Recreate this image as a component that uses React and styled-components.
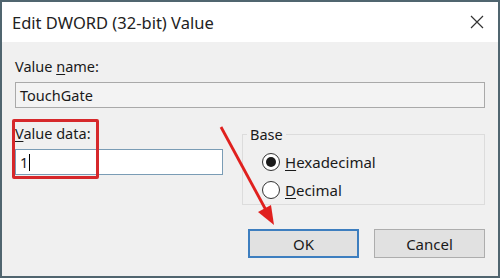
import React from 'react'
import styled, { createGlobalStyle } from 'styled-components'

const Global = createGlobalStyle`
  html, body { margin: 0; padding: 0; background: #f0f0f0; }
  * { box-sizing: border-box; }
`

const Window = styled.div`
  position: relative;
  width: 500px;
  height: 278px;
  border: 2px solid #50656f;
  background: #f0f0f0;
  font-family: "Segoe UI", "Noto Sans", "Open Sans", sans-serif;
  color: #1a1a1a;
  overflow: hidden;
`

const TitleBar = styled.div`
  height: 40px;
  background: #fff;
  display: flex;
  align-items: center;
  justify-content: space-between;
  padding: 0 14px 0 10px;
`

const Title = styled.div`
  font-size: 16.5px;
  color: #222;
`

const Body = styled.div`
  padding: 14px 13px 0 13px;
`

const Label = styled.div`
  font-size: 14.5px;
  line-height: 20px;
  margin-bottom: ${p => p.$mb || 6}px;
  u { text-decoration: underline; text-underline-offset: 2px; }
`

const TextBox = styled.div`
  height: 26px;
  border: 1px solid ${p => (p.$active ? '#7a9cb5' : '#a9a9a9')};
  background: ${p => (p.$active ? '#fff' : '#f3f3f3')};
  font-size: 14.5px;
  line-height: 24px;
  padding-left: 4px;
  display: flex;
  align-items: center;
`

const Caret = styled.span`
  display: inline-block;
  width: 1px;
  height: 17px;
  background: #000;
  margin-left: 1px;
`

const Row = styled.div`
  display: grid;
  grid-template-columns: 208px 243px;
  column-gap: 19px;
  margin-top: 15px;
`

const DataCol = styled.div`
  position: relative;
`

const Group = styled.fieldset`
  margin: 5px 0 0 0;
  padding: 4px 0 6px 19px;
  border: 1px solid #dcdcdc;
  height: 81px;
  position: relative;
  top: -4px;
`

const Legend = styled.legend`
  font-size: 14.5px;
  padding: 0 3px;
  margin-left: -15px;
`

const RadioRow = styled.div`
  display: flex;
  align-items: center;
  height: 28px;
  font-size: 15px;
  u { text-decoration: underline; text-underline-offset: 2px; }
`

const Radio = styled.span`
  width: 18px;
  height: 18px;
  border-radius: 50%;
  border: 1px solid #333;
  background: #fff;
  margin-right: 5px;
  display: flex;
  align-items: center;
  justify-content: center;
  &::after {
    content: '';
    width: 10px;
    height: 10px;
    border-radius: 50%;
    background: ${p => (p.$checked ? '#1a1a1a' : 'transparent')};
  }
`

const Buttons = styled.div`
  display: flex;
  justify-content: flex-end;
  gap: 15px;
  margin-top: 20px;
`

const Button = styled.div`
  width: 111px;
  height: 29px;
  background: #e1e1e1;
  border: ${p => (p.$default ? '2px solid #3d7ebf' : '1px solid #adadad')};
  display: flex;
  align-items: center;
  justify-content: center;
  font-size: 15px;
`

const Highlight = styled.div`
  position: absolute;
  left: 10px;
  top: 117px;
  width: 87px;
  height: 60px;
  border: 3px solid #d6282b;
  border-radius: 2px;
  pointer-events: none;
`

const Arrow = styled.svg`
  position: absolute;
  left: 0;
  top: 0;
  pointer-events: none;
`

export default function App() {
  return (
    <>
      <Global />
      <Window>
        <TitleBar>
          <Title>Edit DWORD (32-bit) Value</Title>
          <svg width="14" height="14" viewBox="0 0 14 14">
            <path d="M1 1L13 13M13 1L1 13" stroke="#333" strokeWidth="1.2" />
          </svg>
        </TitleBar>
        <Body>
          <Label>Value <u>n</u>ame:</Label>
          <TextBox>TouchGate</TextBox>
          <Row>
            <DataCol>
              <Label>
                <u>V</u>alue data:
              </Label>
              <TextBox $active>
                1<Caret />
              </TextBox>
            </DataCol>
            <Group>
              <Legend>Base</Legend>
              <RadioRow>
                <Radio $checked />
                <span><u>H</u>exadecimal</span>
              </RadioRow>
              <RadioRow>
                <Radio />
                <span><u>D</u>ecimal</span>
              </RadioRow>
            </Group>
          </Row>
          <Buttons>
            <Button $default>OK</Button>
            <Button>Cancel</Button>
          </Buttons>
        </Body>
        <Highlight />
        <Arrow width="500" height="278" viewBox="0 0 500 278">
          <line x1="219" y1="125" x2="265" y2="210" stroke="#e0201e" strokeWidth="2.8" />
          <path d="M272 223L256 210L269 203Z" fill="#e0201e" />
        </Arrow>
      </Window>
    </>
  )
}
